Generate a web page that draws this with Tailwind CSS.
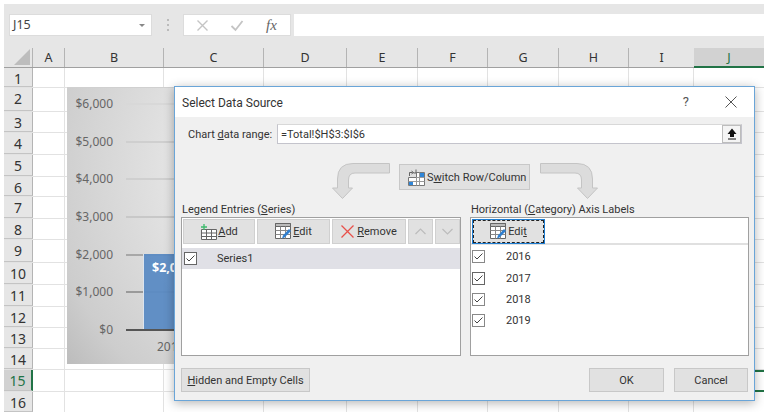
<!DOCTYPE html>
<html lang="en">
<head>
    <meta charset="UTF-8">
    <title>Select Data Source</title>
    <script src="https://cdn.jsdelivr.net/npm/@tailwindcss/browser@4"></script>
</head>
<body class="bg-white overflow-hidden">
<div class="relative w-[764px] h-[412px] overflow-hidden pl-[4px] pt-[4px] font-['Noto_Sans',sans-serif] text-[#333]">

    <!-- Formula bar -->
    <div class="h-[44px] bg-[#e6e6e6] pt-[10px] pl-[5px] flex border-b border-[#e6e6e6]">
        <div class="w-[143px] h-[22px] bg-white border border-[#dcdcdc] flex items-center justify-between pl-[3px] pr-[6px] text-[12.5px] text-[#444]">
            <span>J15</span>
            <span class="w-0 h-0 border-x-[3px] border-x-transparent border-t-[3px] border-t-[#888]"></span>
        </div>
        <div class="w-[31px] h-[22px] flex flex-col items-center justify-center gap-[3px]">
            <span class="w-[2px] h-[2px] bg-[#bbb]"></span>
            <span class="w-[2px] h-[2px] bg-[#bbb]"></span>
            <span class="w-[2px] h-[2px] bg-[#bbb]"></span>
        </div>
        <div class="w-[108px] h-[22px] bg-white border border-[#dcdcdc] flex items-center">
            <svg class="ml-[12px]" width="13" height="13" viewBox="0 0 13 13" fill="none" stroke="#c4c4c4" stroke-width="1.4"><path d="M1.5 1.5l10 10M11.5 1.5l-10 10"/></svg>
            <svg class="ml-[21px]" width="14" height="13" viewBox="0 0 14 13" fill="none" stroke="#c4c4c4" stroke-width="1.8"><path d="M1.5 7l4 4 7-9"/></svg>
            <span class="ml-[22px] font-['Liberation_Serif',serif] italic text-[15px] leading-none text-[#666]">fx</span>
        </div>
        <div class="ml-[3px] flex-1 h-[22px] bg-white"></div>
    </div>

    <!-- Column headers -->
    <div class="h-[19px] bg-[#e6e6e6] flex text-[12.5px] leading-[20px] text-center text-[#333] border-b border-[#a0a0a0] box-content">
        <div class="w-[29px] relative border-r border-[#b4b4b4]">
            <span class="absolute right-[2px] bottom-[2px] w-0 h-0 border-l-[16px] border-l-transparent border-b-[16px] border-b-[#bdbdbd]"></span>
        </div>
        <div class="w-[32px] border-r border-[#b4b4b4]">A</div>
        <div class="w-[99px] border-r border-[#b4b4b4]">B</div>
        <div class="w-[100px] border-r border-[#b4b4b4]">C</div>
        <div class="w-[83px] border-r border-[#b4b4b4]">D</div>
        <div class="w-[71px] border-r border-[#b4b4b4]">E</div>
        <div class="w-[70px] border-r border-[#b4b4b4]">F</div>
        <div class="w-[71px] border-r border-[#b4b4b4]">G</div>
        <div class="w-[70px] border-r border-[#b4b4b4]">H</div>
        <div class="w-[65px]">I</div>
        <div class="flex-1 bg-[#d2d2d2] text-[#217346] border-b-2 border-[#217346] h-[20px]">J</div>
    </div>

    <!-- Sheet rows -->
    <div id="rows"></div>

    <!-- Selected cell edges -->
    <div class="absolute left-[755px] top-[370px] w-[9px] h-[22px] border-y-2 border-[#217346]"></div>

    <!-- Chart -->
    <div class="absolute left-[67px] top-[87px] w-[200px] h-[277px] bg-[radial-gradient(circle_at_125%_30%,#f4f4f4_0%,#e4e4e4_45%,#cdcdcd_85%,#bcbcbc_100%)] border-t border-[#d0d0d0] text-[12px] text-[#666] overflow-hidden">
        <div class="-mt-[3px] flex flex-col">
            <div class="flex items-center h-[37.700px]"><span class="w-[46px] text-right">$6,000</span><span class="ml-[13px] flex-1 h-[2px] bg-[#d8d8d8]"></span></div>
            <div class="flex items-center h-[37.700px]"><span class="w-[46px] text-right">$5,000</span><span class="ml-[13px] flex-1 h-[2px] bg-[#cfcfcf]"></span></div>
            <div class="flex items-center h-[37.700px]"><span class="w-[46px] text-right">$4,000</span><span class="ml-[13px] flex-1 h-[2px] bg-[#cfcfcf]"></span></div>
            <div class="flex items-center h-[37.700px]"><span class="w-[46px] text-right">$3,000</span><span class="ml-[13px] flex-1 h-[2px] bg-[#c8c8c8]"></span></div>
            <div class="flex items-center h-[37.700px]"><span class="w-[46px] text-right">$2,000</span><span class="ml-[13px] flex-1 h-[2px] bg-[#a8a8a8]"></span></div>
            <div class="flex items-center h-[37.700px]"><span class="w-[46px] text-right">$1,000</span><span class="ml-[13px] flex-1 h-[2px] bg-[#9a9a9a]"></span></div>
            <div class="flex items-center h-[37.700px]"><span class="w-[46px] text-right">$0</span><span class="ml-[13px] flex-1 h-[2px] bg-[#555]"></span></div>
        </div>
        <div class="absolute left-[76px] top-[166px] w-[80px] h-[75px] bg-[#5b8bc4]/95 border-l border-[#dce4ee] pl-[8px] pt-[5px] text-white font-bold text-[12.5px]">$2,000</div>
        <div class="absolute left-[90px] top-[250px]">2016</div>
    </div>

    <!-- Dialog -->
    <div class="absolute left-[174px] top-[86px] w-[581px] h-[315px] bg-[#f0f0f0] border border-[#6aa5d8] shadow-[0_2px_10px_rgba(0,0,0,0.3)] font-['Roboto',sans-serif] text-[11px] text-[#333] whitespace-nowrap">
        <div class="h-[30px] bg-white flex items-center pl-[7px] text-[12px]">
            <span class="pt-[2px]">Select Data Source</span>
            <span class="ml-auto text-[13px] text-[#555]">?</span>
            <svg class="ml-[36px] mr-[17px]" width="12" height="12" viewBox="0 0 12 12" fill="none" stroke="#555" stroke-width="1"><path d="M.5.5l11 11M11.5.5l-11 11"/></svg>
        </div>

        <div class="mt-[7px] h-[20px] flex items-center pl-[13px]">
            <span class="w-[89px] pt-[2px]">Chart <u>d</u>ata range:</span>
            <div class="w-[465px] h-[20px] bg-white border border-[#c4c4cc] border-t-[#d8d8d8] flex items-center pl-[3px] relative">
                <span class="pt-[2px]">=Total!$H$3:$I$6</span>
                <div class="absolute right-0 top-0 w-[19px] h-[18px] bg-[#f4f4f4] border border-[#bdbdbd] flex items-center justify-center">
                    <svg width="10" height="12" viewBox="0 0 10 12"><path d="M5 .5L9.5 6H7v3H3V6H.5z" fill="#111"/><path d="M1 11h8" stroke="#111" stroke-width="1"/></svg>
                </div>
            </div>
        </div>

        <div class="mt-[19px] h-[37px] flex items-start pl-[157px]">
            <svg width="58" height="37" viewBox="0 0 58 37" fill="#dcdcdc" stroke="#c4c4c4"><path d="M57.5.5H21Q5.5.5 5.500 16V25H.5L10.500 35.500 20.500 25H16.500V17Q16.500 10 23 10H57.500Z"/></svg>
            <button class="ml-[9px] mt-[1px] w-[131px] h-[26px] bg-[#e1e1e1] border border-[#c8c8c8] flex items-center pl-[8px]">
                <svg class="mr-[2px] shrink-0" width="17" height="17" viewBox="0 0 17 17" fill="none"><path d="M8.500 3.500h8v13h-16v-8h8z" fill="#fff" stroke="#777"/><path d="M11 4h5v4h-5zM1 12h4v4H1z" fill="#2f86d8"/><path d="M8.500 8.500v8M11.500 3.500v13M.5 12.500h16M8.500 8.500h8" stroke="#999"/><path d="M1.500 7V3.500h3M3.500 2l2 1.500-2 1.500" stroke="#444" stroke-width=".8"/><path d="M8 .5V4H5.500" stroke="#444" stroke-width=".8"/></svg>
                <span class="pt-[2px]">S<u>w</u>itch Row/Column</span>
            </button>
            <svg class="ml-[10px] -scale-x-100" width="58" height="37" viewBox="0 0 58 37" fill="#dcdcdc" stroke="#c4c4c4"><path d="M57.5.5H21Q5.5.5 5.500 16V25H.5L10.500 35.500 20.500 25H16.500V17Q16.500 10 23 10H57.500Z"/></svg>
        </div>

        <div class="h-[17px] flex leading-[20px] pl-[7px]">
            <span class="w-[289px]">Legend Entries (<u>S</u>eries)</span>
            <span>Horizontal (<u>C</u>ategory) Axis Labels</span>
        </div>

        <div class="flex h-[139px] pl-[6px] gap-[9px]">
            <!-- Series list -->
            <div class="w-[280px] bg-white border border-[#a0a0a0]">
                <div class="flex gap-[2px] pl-[1px] pt-[1px] h-[26px]">
                    <button class="w-[72px] bg-[#e1e1e1] border border-[#d0d0d0] flex items-center justify-center gap-[1px]">
                        <svg class="shrink-0" width="17" height="16" viewBox="0 0 17 16" fill="none"><path d="M1.500 5.500h15v10h-15zM1.500 9h15M1.500 12.500h15M6.500 5.500v10M11.500 5.500v10" stroke="#666" fill="#fff"/><path d="M4 0v6M1 3h6" stroke="#3dbb6c" stroke-width="1.300"/></svg>
                        <span class="pt-[2px]"><u>A</u>dd</span>
                    </button>
                    <button class="w-[73px] bg-[#e1e1e1] border border-[#d0d0d0] flex items-center justify-center gap-[1px]">
                        <svg class="shrink-0" width="17" height="17" viewBox="0 0 17 17" fill="none"><path d="M.5.5h15v15H.5z" fill="#fff" stroke="#666"/><path d="M.5.5h15v3H.5z" fill="#bbb" stroke="#666"/><path d="M.5 7.500h15M.5 11.500h15M5.500 3.500v12M10.500 3.500v12" stroke="#888"/><path d="M7 15.500l1-3 6-6.500 2 2-6.500 6.500z" fill="#2f7fd0"/></svg>
                        <span class="pt-[2px]"><u>E</u>dit</span>
                    </button>
                    <button class="w-[74px] bg-[#e1e1e1] border border-[#d0d0d0] flex items-center justify-center gap-[3px]">
                        <svg class="shrink-0" width="13" height="13" viewBox="0 0 13 13" fill="none" stroke="#e8504a" stroke-width="1.300"><path d="M.5.5l12 12M12.500.5l-12 12"/></svg>
                        <span class="pt-[2px]"><u>R</u>emove</span>
                    </button>
                    <button class="w-[25px] bg-[#e1e1e1] border border-[#d0d0d0] flex items-center justify-center">
                        <svg width="11" height="7" viewBox="0 0 11 7" fill="none" stroke="#bcbcbc" stroke-width="1.200"><path d="M.5 6l5-5 5 5"/></svg>
                    </button>
                    <button class="w-[25px] bg-[#e1e1e1] border border-[#d0d0d0] flex items-center justify-center">
                        <svg width="11" height="7" viewBox="0 0 11 7" fill="none" stroke="#bcbcbc" stroke-width="1.200"><path d="M.5 1l5 5 5-5"/></svg>
                    </button>
                </div>
                <div class="mt-[4px] h-[21px] bg-[#e0e0e6] flex items-center pl-[2px]">
                    <span class="w-[13px] h-[13px] bg-white border border-[#666] flex items-center justify-center"><svg width="9" height="7" viewBox="0 0 9 7" fill="none" stroke="#444" stroke-width="1"><path d="M.5 3.500l2.500 2.500 5.500-5.500"/></svg></span>
                    <span class="ml-[20px] pt-[2px]">Series1</span>
                </div>
            </div>

            <!-- Axis labels list -->
            <div class="w-[279px] bg-white border border-[#a0a0a0]">
                <div class="h-[27px] border-b-2 border-[#e0e0e0] pl-[1px] pt-[1px]">
                    <button class="w-[73px] h-[25px] bg-[#e1e1e1] border border-[#1f7fd4] outline-1 outline-dashed outline-[#222] -outline-offset-2 flex items-center justify-center gap-[1px]">
                        <svg class="shrink-0" width="17" height="17" viewBox="0 0 17 17" fill="none"><path d="M.5.5h15v15H.5z" fill="#fff" stroke="#666"/><path d="M.5.5h15v3H.5z" fill="#bbb" stroke="#666"/><path d="M.5 7.500h15M.5 11.500h15M5.500 3.500v12M10.500 3.500v12" stroke="#888"/><path d="M7 15.500l1-3 6-6.500 2 2-6.500 6.500z" fill="#2f7fd0"/></svg>
                        <span class="pt-[2px]">Edi<u>t</u></span>
                    </button>
                </div>
                <div class="pl-[1px] pt-[1px]">
                    <div class="h-[21px] flex items-center"><span class="w-[13px] h-[13px] bg-white border border-[#888] flex items-center justify-center"><svg width="9" height="7" viewBox="0 0 9 7" fill="none" stroke="#444" stroke-width="1"><path d="M.5 3.500l2.500 2.500 5.500-5.500"/></svg></span><span class="ml-[21px] pt-[2px]">2016</span></div>
                    <div class="h-[22px] flex items-center"><span class="w-[13px] h-[13px] bg-white border border-[#666] flex items-center justify-center"><svg width="9" height="7" viewBox="0 0 9 7" fill="none" stroke="#444" stroke-width="1"><path d="M.5 3.500l2.500 2.500 5.500-5.500"/></svg></span><span class="ml-[21px] pt-[2px]">2017</span></div>
                    <div class="h-[21px] flex items-center"><span class="w-[13px] h-[13px] bg-white border border-[#888] flex items-center justify-center"><svg width="9" height="7" viewBox="0 0 9 7" fill="none" stroke="#444" stroke-width="1"><path d="M.5 3.500l2.500 2.500 5.500-5.500"/></svg></span><span class="ml-[21px] pt-[2px]">2018</span></div>
                    <div class="h-[21px] flex items-center"><span class="w-[13px] h-[13px] bg-white border border-[#888] flex items-center justify-center"><svg width="9" height="7" viewBox="0 0 9 7" fill="none" stroke="#444" stroke-width="1"><path d="M.5 3.500l2.500 2.500 5.500-5.500"/></svg></span><span class="ml-[21px] pt-[2px]">2019</span></div>
                </div>
            </div>
        </div>

        <div class="mt-[12px] pl-[6px] flex">
            <button class="w-[129px] h-[24px] bg-[#e1e1e1] border border-[#c8c8c8] pt-[2px]"><u>H</u>idden and Empty Cells</button>
            <button class="ml-[279px] w-[75px] h-[24px] bg-[#e1e1e1] border border-[#c8c8c8] pt-[2px]">OK</button>
            <button class="ml-[10px] w-[74px] h-[24px] bg-[#e1e1e1] border border-[#c8c8c8] pt-[2px]">Cancel</button>
        </div>
    </div>
</div>

<script>
    var heights = [20, 24, 21, 22, 22, 20, 22, 21, 23, 22, 22, 21, 21, 21, 22, 21];
    var widths = [32, 99, 100, 83, 71, 70, 71, 70, 65];
    var html = '';
    heights.forEach(function (h, i) {
        var active = i === 14;
        html += '<div class="flex border-b border-[#e2e2e2]" style="height:' + h + 'px">';
        html += active
            ? '<div class="w-[29px] bg-[#d2d2d2] border-r-2 border-[#217346] text-[#217346] text-[14px] leading-[22px] text-center border-b border-b-[#c4c4c4]">' + (i + 1) + '</div>'
            : '<div class="w-[29px] bg-[#e6e6e6] border-r border-[#b4b4b4] text-[14px] leading-[22px] text-center border-b border-b-[#c4c4c4]">' + (i + 1) + '</div>';
        widths.forEach(function (w) {
            html += '<div class="border-r border-[#e2e2e2]" style="width:' + w + 'px"></div>';
        });
        html += '</div>';
    });
    document.getElementById('rows').innerHTML = html;
</script>
</body>
</html>
